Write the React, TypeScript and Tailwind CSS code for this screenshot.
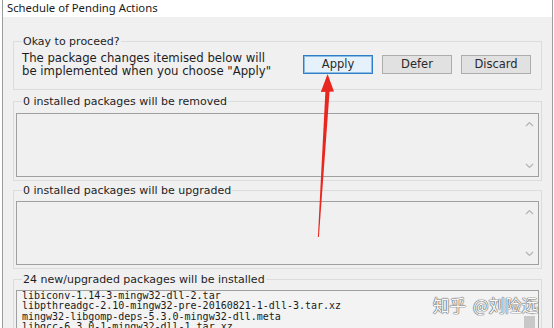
import React from "react";

const LIST_FONT = "font-['DejaVu_Sans_Mono','Liberation_Mono',monospace]";

const installed = [
  "libiconv-1.14-3-mingw32-dll-2.tar",
  "libpthreadgc-2.10-mingw32-pre-20160821-1-dll-3.tar.xz",
  "mingw32-libgomp-deps-5.3.0-mingw32-dll.meta",
  "libgcc-6.3.0-1-mingw32-dll-1.tar.xz",
];

function Chevron({ up }: { up?: boolean }) {
  return (
    <svg width="9" height="6" viewBox="0 0 9 6" className="text-[#b4b4b4]">
      <path
        d={up ? "M1 5 L4.5 1.5 L8 5" : "M1 1 L4.5 4.5 L8 1"}
        fill="none"
        stroke="currentColor"
        strokeWidth="1.2"
      />
    </svg>
  );
}

function EmptyList() {
  return (
    <div className="flex h-[64px] justify-end border border-[#a0a0a0] bg-[#f0f0f0]">
      <div className="flex w-[17px] flex-col items-center justify-between py-[7px]">
        <Chevron up />
        <Chevron />
      </div>
    </div>
  );
}

function Group({
  label,
  className,
  children,
}: {
  label: string;
  className?: string;
  children: React.ReactNode;
}) {
  return (
    <fieldset className={`border border-[#dcdcdc] px-[2px] ${className ?? ""}`}>
      <legend className="ml-[6px] px-[1px] text-[11px] leading-[14px] text-[#1e1e1e]">
        {label}
      </legend>
      {children}
    </fieldset>
  );
}

function Btn({ label, primary }: { label: string; primary?: boolean }) {
  return (
    <button
      className={`h-[19px] w-[70px] border text-[11.5px] leading-none text-[#2a2a2a] ${
        primary
          ? "border-[#2f7fc8] bg-[#e5f1fb] ring-1 ring-inset ring-[#8cbbe4]"
          : "border-[#adadad] bg-[#e1e1e1]"
      }`}
    >
      {label}
    </button>
  );
}

export default function App() {
  return (
    <div className="relative h-[328px] w-[554px] overflow-hidden bg-white font-['DejaVu_Sans','Verdana',sans-serif]">
      <div className="ml-[2px] mr-[1px] flex h-full flex-col border-x border-[#9c9c9c]">
        {/* Title bar */}
        <div className="flex h-[22px] items-center bg-white pl-[4px] font-['Noto_Sans',sans-serif] text-[11.3px] text-[#1a1a1a]">
          Schedule of Pending Actions
        </div>

        <div className="flex-1 bg-[#f0f0f0] px-[10px] pt-[18px]">
          {/* Confirm */}
          <fieldset className="h-[55px] border border-[#dcdcdc] px-[8px]">
            <legend className="px-[1px] text-[11px] leading-[14px] text-[#1e1e1e]">
              Okay to proceed?
            </legend>
            <div className="flex items-start justify-between pr-[2px] pt-[3px]">
              <p className="text-[11.7px] leading-[13.5px] text-[#1e1e1e]">
                The package changes itemised below will
                <br />
                be implemented when you choose "Apply"
              </p>
              <div className="mt-[3px] flex gap-[9px]">
                <Btn label="Apply" primary />
                <Btn label="Defer" />
                <Btn label="Discard" />
              </div>
            </div>
          </fieldset>

          <Group label="0 installed packages will be removed" className="mt-[5px] pb-[3px]">
            <div className="mt-[4px]">
              <EmptyList />
            </div>
          </Group>

          <Group label="0 installed packages will be upgraded" className="mt-[3px] pb-[3px]">
            <div className="mt-[3px]">
              <EmptyList />
            </div>
          </Group>

          <Group label="24 new/upgraded packages will be installed" className="mt-[4px] h-[80px]">
            <div className="mt-[3px] flex h-[60px] border border-[#a0a0a0] bg-[#f3f3f3]">
              <div className={`flex-1 pl-[5px] text-[10px] leading-[10.3px] text-[#1a1a1a] ${LIST_FONT}`}>
                {installed.map((p) => (
                  <div key={p} className="whitespace-nowrap">
                    {p}
                  </div>
                ))}
              </div>
              <div className="flex w-[17px] flex-col items-center pt-[7px]">
                <Chevron up />
                <div className="mt-[12px] h-[12px] w-[11px] bg-[#c8c8c8]" />
              </div>
            </div>
          </Group>
        </div>
      </div>

      {/* Red annotation arrow */}
      <svg className="pointer-events-none absolute inset-0" width="554" height="328">
        <polygon points="327.6,74 320.8,92 334,91.5" fill="#e8271f" />
        <polygon points="325.4,91 329.6,91 318.9,237 317.9,237" fill="#e8271f" />
      </svg>

      {/* Watermark */}
      <div className="pointer-events-none absolute left-[433px] top-[295px] flex gap-[7px] whitespace-nowrap font-['Noto_Sans_CJK_SC',sans-serif] text-[16.5px] leading-[20px] text-[#fafafa] [text-shadow:0_0_1px_#555,0_0_1px_#555,0_0_1px_#555]">
        <span>知乎</span>
        <span>@刘险远</span>
      </div>
    </div>
  );
}
